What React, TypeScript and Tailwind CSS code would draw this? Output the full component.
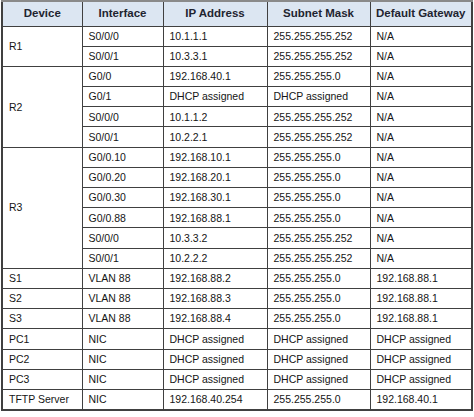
import React from "react";

type Row = { iface: string; ip: string; mask: string; gw: string };
type Group = { device: string; rows: Row[] };

const groups: Group[] = [
  {
    device: "R1",
    rows: [
      { iface: "S0/0/0", ip: "10.1.1.1", mask: "255.255.255.252", gw: "N/A" },
      { iface: "S0/0/1", ip: "10.3.3.1", mask: "255.255.255.252", gw: "N/A" },
    ],
  },
  {
    device: "R2",
    rows: [
      { iface: "G0/0", ip: "192.168.40.1", mask: "255.255.255.0", gw: "N/A" },
      { iface: "G0/1", ip: "DHCP assigned", mask: "DHCP assigned", gw: "N/A" },
      { iface: "S0/0/0", ip: "10.1.1.2", mask: "255.255.255.252", gw: "N/A" },
      { iface: "S0/0/1", ip: "10.2.2.1", mask: "255.255.255.252", gw: "N/A" },
    ],
  },
  {
    device: "R3",
    rows: [
      { iface: "G0/0.10", ip: "192.168.10.1", mask: "255.255.255.0", gw: "N/A" },
      { iface: "G0/0.20", ip: "192.168.20.1", mask: "255.255.255.0", gw: "N/A" },
      { iface: "G0/0.30", ip: "192.168.30.1", mask: "255.255.255.0", gw: "N/A" },
      { iface: "G0/0.88", ip: "192.168.88.1", mask: "255.255.255.0", gw: "N/A" },
      { iface: "S0/0/0", ip: "10.3.3.2", mask: "255.255.255.252", gw: "N/A" },
      { iface: "S0/0/1", ip: "10.2.2.2", mask: "255.255.255.252", gw: "N/A" },
    ],
  },
  { device: "S1", rows: [{ iface: "VLAN 88", ip: "192.168.88.2", mask: "255.255.255.0", gw: "192.168.88.1" }] },
  { device: "S2", rows: [{ iface: "VLAN 88", ip: "192.168.88.3", mask: "255.255.255.0", gw: "192.168.88.1" }] },
  { device: "S3", rows: [{ iface: "VLAN 88", ip: "192.168.88.4", mask: "255.255.255.0", gw: "192.168.88.1" }] },
  { device: "PC1", rows: [{ iface: "NIC", ip: "DHCP assigned", mask: "DHCP assigned", gw: "DHCP assigned" }] },
  { device: "PC2", rows: [{ iface: "NIC", ip: "DHCP assigned", mask: "DHCP assigned", gw: "DHCP assigned" }] },
  { device: "PC3", rows: [{ iface: "NIC", ip: "DHCP assigned", mask: "DHCP assigned", gw: "DHCP assigned" }] },
  { device: "TFTP Server", rows: [{ iface: "NIC", ip: "192.168.40.254", mask: "255.255.255.0", gw: "192.168.40.1" }] },
];

const td = "border border-[#404040] px-[6px] py-0 h-[20.2px] leading-none align-middle";

export default function App() {
  return (
    <div className="w-[474px] h-[417px] bg-white pl-[1px]" style={{ fontFamily: '"Liberation Sans", Arial, sans-serif' }}>
      <table className="table-fixed border-collapse border-2 border-[#404040] text-[10.5px] text-[#151515] w-[470px]">
        <colgroup>
          <col className="w-[80px]" />
          <col className="w-[81px]" />
          <col className="w-[104px]" />
          <col className="w-[103px]" />
          <col className="w-[102px]" />
        </colgroup>
        <thead>
          <tr className="bg-[#dce6f2] border-t-2 border-t-[#8a8a8a]">
            {["Device", "Interface", "IP Address", "Subnet Mask", "Default Gateway"].map((h) => (
              <th key={h} className="border border-[#404040] border-t-[#8a8a8a] h-[25px] text-center font-bold text-[11.5px] text-[#1f2430]">
                {h}
              </th>
            ))}
          </tr>
        </thead>
        <tbody>
          {groups.map((g) =>
            g.rows.map((r, i) => (
              <tr key={g.device + i}>
                {i === 0 && (
                  <td rowSpan={g.rows.length} className={td}>
                    {g.device}
                  </td>
                )}
                <td className={td}>{r.iface}</td>
                <td className={td}>{r.ip}</td>
                <td className={td}>{r.mask}</td>
                <td className={td}>{r.gw}</td>
              </tr>
            ))
          )}
        </tbody>
      </table>
    </div>
  );
}
